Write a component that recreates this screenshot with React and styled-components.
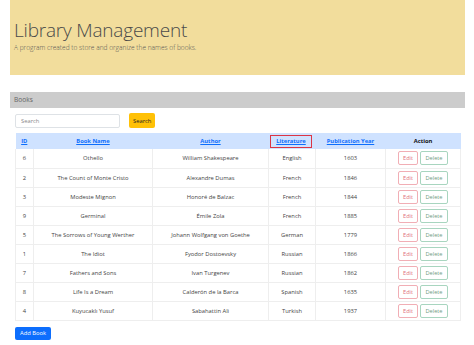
import React from 'react';
import styled, { createGlobalStyle } from 'styled-components';

const GlobalStyle = createGlobalStyle`
	html, body {
		margin: 0;
		padding: 0;
		background: #ffffff;
	}
	body {
		font-family: "Open Sans", "Noto Sans", sans-serif;
		color: #212529;
	}
`;

const books = [
	{ id: 6, name: 'Othello', author: 'William Shakespeare', lit: 'English', year: 1603 },
	{ id: 2, name: 'The Count of Monte Cristo', author: 'Alexandre Dumas', lit: 'French', year: 1846 },
	{ id: 3, name: 'Modeste Mignon', author: 'Honoré de Balzac', lit: 'French', year: 1844 },
	{ id: 9, name: 'Germinal', author: 'Émile Zola', lit: 'French', year: 1885 },
	{ id: 5, name: 'The Sorrows of Young Werther', author: 'Johann Wolfgang von Goethe', lit: 'German', year: 1779 },
	{ id: 1, name: 'The Idiot', author: 'Fyodor Dostoevsky', lit: 'Russian', year: 1866 },
	{ id: 7, name: 'Fathers and Sons', author: 'Ivan Turgenev', lit: 'Russian', year: 1862 },
	{ id: 8, name: 'Life Is a Dream', author: 'Calderón de la Barca', lit: 'Spanish', year: 1635 },
	{ id: 4, name: 'Kuyucaklı Yusuf', author: 'Sabahattin Ali', lit: 'Turkish', year: 1937 },
];

const columns = [
	{ key: 'id', label: 'ID', width: 18, link: true },
	{ key: 'name', label: 'Book Name', width: 119, link: true },
	{ key: 'author', label: 'Author', width: 116, link: true },
	{ key: 'lit', label: 'Literature', width: 47, link: true, active: true },
	{ key: 'year', label: 'Publication Year', width: 70, link: true },
	{ key: 'action', label: 'Action', width: 75 },
];

function App() {
	return (
		<Page>
			<GlobalStyle />
			<Jumbo>
				<Title>Library Management</Title>
				<Lead>A program created to store and organize the names of books.</Lead>
			</Jumbo>
			<Card>
				<CardHeader>Books</CardHeader>
				<CardBody>
					<SearchRow>
						<SearchInput placeholder="Search" />
						<Btn variant="warning">Search</Btn>
					</SearchRow>
					<Table>
						<colgroup>
							{columns.map(c => <col key={c.key} style={{ width: c.width }} />)}
						</colgroup>
						<thead>
							<tr>
								{columns.map(c => (
									<Th key={c.key}>
										{c.link ? <SortLink active={c.active}>{c.label}</SortLink> : c.label}
									</Th>
								))}
							</tr>
						</thead>
						<tbody>
							{books.map(b => (
								<tr key={b.id}>
									<Td>{b.id}</Td>
									<Td>{b.name}</Td>
									<Td>{b.author}</Td>
									<Td>{b.lit}</Td>
									<Td>{b.year}</Td>
									<Td>
										<Actions>
											<OutlineBtn tone="danger">Edit</OutlineBtn>
											<OutlineBtn tone="success">Delete</OutlineBtn>
										</Actions>
									</Td>
								</tr>
							))}
						</tbody>
					</Table>
					<Btn variant="primary" wide>Add Book</Btn>
				</CardBody>
			</Card>
		</Page>
	);
}

const Page = styled.div`
	padding: 0 9px 0 10px;
	height: 345px;
	overflow: hidden;
	box-sizing: border-box;
`;

const Jumbo = styled.header`
	background: #f2dd9c;
	height: 75px;
	padding: 18px 4px 0;
	box-sizing: border-box;
`;

const Title = styled.h1`
	margin: 0;
	font-weight: 300;
	font-size: 19px;
	line-height: 24px;
	color: #4a4a4a;
	letter-spacing: -0.2px;
`;

const Lead = styled.p`
	margin: 1px 0 0;
	font-size: 6.6px;
	line-height: 9px;
	font-weight: 300;
	color: #555;
`;

const Card = styled.section`
	margin-top: 17px;
`;

const CardHeader = styled.div`
	background: #cccccc;
	height: 16px;
	line-height: 16px;
	padding-left: 4px;
	font-size: 6.6px;
	color: #666;
`;

const CardBody = styled.div`
	padding: 5px 5px 0;
`;

const SearchRow = styled.div`
	display: flex;
	align-items: center;
	gap: 9px;
	margin-bottom: 5px;
`;

const SearchInput = styled.input`
	width: 105px;
	height: 14px;
	box-sizing: border-box;
	border: 1px solid #dee2e6;
	border-radius: 2px;
	padding: 0 5px;
	font-family: inherit;
	font-size: 5.8px;
	outline: none;
	&::placeholder {
		color: #888;
	}
`;

const Btn = styled.button`
	display: block;
	height: ${p => (p.wide ? 13 : 15)}px;
	padding: 0 ${p => (p.wide ? 5 : 4)}px;
	border: none;
	border-radius: 2px;
	font-family: inherit;
	font-size: 5.8px;
	background: ${p => (p.variant === 'primary' ? '#0d6efd' : '#ffc107')};
	color: ${p => (p.variant === 'primary' ? '#ffffff' : '#222')};
	margin-top: ${p => (p.wide ? 6 : 0)}px;
`;

const Table = styled.table`
	width: 445px;
	table-layout: fixed;
	border-collapse: collapse;
	font-size: 5.8px;
`;

const Th = styled.th`
	background: #cfe2ff;
	height: 16px;
	padding: 0;
	text-align: center;
	font-weight: 700;
	color: #111;
	border-right: 1px solid #cfe2ff;
`;

const SortLink = styled.a`
	color: #0d6efd;
	text-decoration: underline;
	display: ${p => (p.active ? 'block' : 'inline')};
	${p => p.active && `
		margin: 0 3px 0 1px;
		border: 1px solid #dc3545;
		line-height: 11px;
	`}
`;

const Td = styled.td`
	height: 19px;
	padding: 0;
	box-sizing: border-box;
	text-align: center;
	color: #444;
	border: 1px solid #eeeeee;
	border-top: none;
`;

const Actions = styled.div`
	display: flex;
	justify-content: center;
	gap: 2px;
`;

const OutlineBtn = styled.button`
	height: 14px;
	padding: 0 ${p => (p.tone === 'danger' ? 4 : 4.5)}px;
	background: #fff;
	border-radius: 2px;
	font-family: inherit;
	font-size: 5.6px;
	border: 1px solid ${p => (p.tone === 'danger' ? '#f1aeb5' : '#a8d5bf')};
	color: ${p => (p.tone === 'danger' ? '#e0707c' : '#6f9a83')};
`;

export default App;
